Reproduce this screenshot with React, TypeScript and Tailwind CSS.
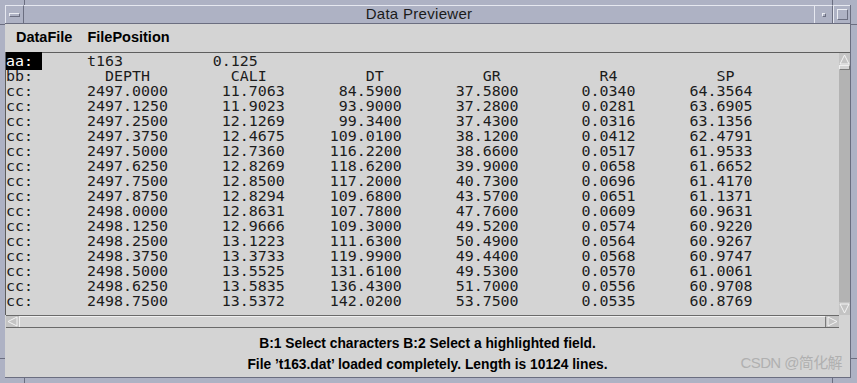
import React from 'react'

const rows: string[][] = [
  ['2497.0000', '11.7063', '84.5900', '37.5800', '0.0340', '64.3564'],
  ['2497.1250', '11.9023', '93.9000', '37.2800', '0.0281', '63.6905'],
  ['2497.2500', '12.1269', '99.3400', '37.4300', '0.0316', '63.1356'],
  ['2497.3750', '12.4675', '109.0100', '38.1200', '0.0412', '62.4791'],
  ['2497.5000', '12.7360', '116.2200', '38.6600', '0.0517', '61.9533'],
  ['2497.6250', '12.8269', '118.6200', '39.9000', '0.0658', '61.6652'],
  ['2497.7500', '12.8500', '117.2000', '40.7300', '0.0696', '61.4170'],
  ['2497.8750', '12.8294', '109.6800', '43.5700', '0.0651', '61.1371'],
  ['2498.0000', '12.8631', '107.7800', '47.7600', '0.0609', '60.9631'],
  ['2498.1250', '12.9666', '109.3000', '49.5200', '0.0574', '60.9220'],
  ['2498.2500', '13.1223', '111.6300', '50.4900', '0.0564', '60.9267'],
  ['2498.3750', '13.3733', '119.9900', '49.4400', '0.0568', '60.9747'],
  ['2498.5000', '13.5525', '131.6100', '49.5300', '0.0570', '61.0061'],
  ['2498.6250', '13.5835', '136.4300', '51.7000', '0.0556', '60.9708'],
  ['2498.7500', '13.5372', '142.0200', '53.7500', '0.0535', '60.8769'],
]

const headers = ['DEPTH', 'CALI', 'DT', 'GR', 'R4', 'SP']

// fixed-width columns: 5 char prefix, then 13 char fields
const headerLine = 'bb:  ' + headers.map((h) => h.padStart(11) + '  ').join('')
const dataLines = rows.map((r) => 'cc:  ' + r.map((v) => v.padStart(13)).join(''))

function Triangle({ dir }: { dir: 'up' | 'down' | 'left' | 'right' }) {
  const pts = {
    up: '5.5,1 10,10 1,10',
    down: '1,1 10,1 5.5,10',
    left: '1,5.5 10,1 10,10',
    right: '1,1 10,5.5 1,10',
  }[dir]
  return (
    <svg width="11" height="11" viewBox="0 0 11 11">
      <polygon points={pts} fill="none" stroke="#f4f4f4" strokeWidth="1" />
    </svg>
  )
}

export default function App() {
  return (
    <div className="relative w-[857px] h-[383px] bg-[#aeb2c4] pt-[5px] pl-[5px] pr-[6px] pb-[5px] font-['Liberation_Sans',sans-serif] text-black overflow-hidden">
      {/* frame corner ticks */}
      <div className="absolute left-[24px] top-0 h-[5px] w-px bg-[#6b6e80]" />
      <div className="absolute left-[832px] top-0 h-[5px] w-px bg-[#6b6e80]" />
      <div className="absolute left-0 top-[24px] w-[5px] h-px bg-[#6b6e80]" />
      <div className="absolute right-0 top-[24px] w-[6px] h-px bg-[#6b6e80]" />
      <div className="absolute left-0 top-[358px] w-[5px] h-px bg-[#6b6e80]" />
      <div className="absolute right-0 top-[358px] w-[6px] h-px bg-[#6b6e80]" />
      <div className="absolute left-[24px] bottom-0 h-[5px] w-px bg-[#6b6e80]" />
      <div className="absolute left-[832px] bottom-0 h-[5px] w-px bg-[#6b6e80]" />

      <div className="flex h-full flex-col border-r border-b border-[#6b6e80]">
        {/* Title bar */}
        <div className="flex h-[19px] border-b border-[#6b6e80]">
          <div className="flex w-[19px] items-center justify-center border-t border-l border-[#e6e8f0] border-r border-r-[#6b6e80]">
            <div className="h-[4px] w-[11px] border-t border-l border-[#eceef4] border-b border-r border-b-[#6b6e80] border-r-[#6b6e80]" />
          </div>
          <div className="flex flex-1 items-center justify-center border-t border-[#e6e8f0] text-[15px] tracking-[0.3px] text-[#1a1a1a]">
            Data Previewer
          </div>
          <div className="flex w-[19px] items-center justify-center border-t border-l border-[#e6e8f0] border-r border-r-[#6b6e80]">
            <div className="h-[4px] w-[4px] border-t border-l border-[#eceef4] border-b border-r border-b-[#6b6e80] border-r-[#6b6e80]" />
          </div>
          <div className="flex w-[17px] items-center justify-center border-t border-l border-[#e6e8f0]">
            <div className="h-[11px] w-[11px] border-t border-l border-[#eceef4] border-b border-r border-b-[#6b6e80] border-r-[#6b6e80]" />
          </div>
        </div>

        <div className="flex flex-1 flex-col bg-[#d4d4d4]">
          {/* Menu bar */}
          <div className="flex h-[28px] items-center gap-[15px] pl-[11px] text-[14.5px] font-bold">
            <span>DataFile</span>
            <span>FilePosition</span>
          </div>

          {/* Text pane */}
          <div className="flex h-[263px] border-t border-l border-[#5e5e5e]">
            <div className="flex-1 pt-px font-['DejaVu_Sans_Mono',monospace] text-[14.95px] leading-[15px] whitespace-pre text-[#1c1c1c]">
              <div>
                <span className="bg-black text-white">aa: </span>
                {'     t163          0.125'}
              </div>
              <div>{headerLine}</div>
              {dataLines.map((l, i) => (
                <div key={i}>{l}</div>
              ))}
            </div>
            <div className="flex w-[11px] flex-col bg-[#b3b3b3]">
              <div className="flex h-[12px] items-center justify-center bg-[#c4c4c4]">
                <Triangle dir="up" />
              </div>
              <div className="h-[5px] border-t border-l border-[#f0f0f0] border-b border-r border-b-[#7a7a7a] border-r-[#7a7a7a] bg-[#d4d4d4]" />
              <div className="flex-1" />
              <div className="flex h-[13px] items-center justify-center bg-[#c4c4c4]">
                <Triangle dir="down" />
              </div>
            </div>
          </div>

          {/* Horizontal scrollbar */}
          <div className="flex h-[13px] ml-px mr-[11px] border-t border-b border-[#6a6a6a]">
            <div className="flex w-[13px] items-center justify-center bg-[#c4c4c4]">
              <Triangle dir="left" />
            </div>
            <div className="flex-1 border-t border-l border-[#f0f0f0] border-r border-r-[#7a7a7a]" />
            <div className="flex w-[13px] items-center justify-center bg-[#c4c4c4]">
              <Triangle dir="right" />
            </div>
          </div>

          {/* Status lines */}
          <div className="relative flex flex-1 flex-col items-center pt-[5px] text-[13.8px] font-bold leading-[21px]">
            <div>B:1 Select characters B:2 Select a highlighted field.</div>
            <div>File ’t163.dat’ loaded completely. Length is 10124 lines.</div>
            <div className="absolute right-[8px] bottom-[4px] text-[15px] font-normal tracking-[-0.6px] text-[#b0b0b0] font-['Liberation_Sans','Noto_Sans_CJK_SC',sans-serif]">
              CSDN @简化解
            </div>
          </div>
        </div>
      </div>
    </div>
  )
}
